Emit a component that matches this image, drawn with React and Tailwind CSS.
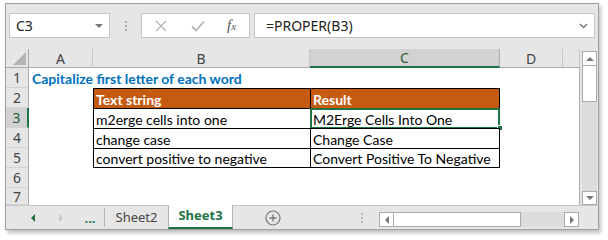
import React from "react";

const cellFont = { fontFamily: "Lato, 'Liberation Sans', sans-serif" };
const uiFont = { fontFamily: "'Noto Sans', 'Open Sans', sans-serif" };

const cols = ["A", "B", "C", "D", ""];
const rows = [1, 2, 3, 4, 5, 6, 7];

const data = {
    2: ["Text string", "Result"],
    3: ["m2erge cells into one", "M2Erge Cells Into One"],
    4: ["change case", "Change Case"],
    5: ["convert positive to negative", "Convert Positive To Negative"],
};

function FormulaBar() {
    return (
        <div className="flex items-stretch h-[25px] mt-[9px] px-[3px]" style={uiFont}>
            <div className="w-[101px] bg-white border border-[#c6c6c6] flex items-center justify-between pl-[6px] pr-[6px]">
                <span className="text-[14px] text-[#222]">C3</span>
                <span className="w-0 h-0 border-l-[4px] border-r-[4px] border-t-[4px] border-l-transparent border-r-transparent border-t-[#777]"></span>
            </div>
            <div className="w-[31px] flex flex-col items-center justify-center gap-[2px]">
                <span className="w-[2px] h-[2px] bg-[#aaa]"></span>
                <span className="w-[2px] h-[2px] bg-[#aaa]"></span>
                <span className="w-[2px] h-[2px] bg-[#aaa]"></span>
            </div>
            <div className="w-[109px] bg-white border border-[#c6c6c6] flex items-center">
                <svg className="ml-[13px]" width="12" height="12" viewBox="0 0 12 12">
                    <path d="M1 1 L11 11 M11 1 L1 11" stroke="#b4b4b4" strokeWidth="1.4" fill="none" />
                </svg>
                <svg className="ml-[24px]" width="14" height="12" viewBox="0 0 14 12">
                    <path d="M1 6.5 L5 10.5 L13 1.5" stroke="#b4b4b4" strokeWidth="1.8" fill="none" />
                </svg>
                <span className="ml-[22px] text-[15px] italic text-[#555]" style={{ fontFamily: "'Liberation Serif', serif" }}>
                    f<span className="text-[11px]">x</span>
                </span>
            </div>
            <div className="w-[4px]"></div>
            <div className="w-[341px] bg-white border border-[#c6c6c6] flex items-center justify-between pl-[11px] pr-[6px]">
                <span className="text-[14px] text-[#222]">=PROPER(B3)</span>
                <svg width="9" height="6" viewBox="0 0 9 6">
                    <path d="M1 1 L4.5 4.5 L8 1" stroke="#777" strokeWidth="1.5" fill="none" />
                </svg>
            </div>
        </div>
    );
}

function Grid() {
    return (
        <div
            className="grid grid-cols-[23px_64px_217px_190px_63px_17px] grid-rows-[19px_20px_20px_20px_20px_20px_20px_17px] overflow-hidden"
            style={cellFont}
        >
            {/* corner */}
            <div className="border-r border-b border-[#ababab] flex items-end justify-end p-[2px]">
                <span className="w-0 h-0" style={{ borderBottom: "13px solid #b4b4b4", borderLeft: "13px solid transparent" }}></span>
            </div>
            {cols.map((c) => (
                <div
                    key={c || "e"}
                    className={
                        c === "C"
                            ? "bg-[#d2d2d2] border-r border-[#ababab] border-b-2 border-b-[#217346] flex items-center justify-center text-[14px] text-[#1e5b3a]"
                            : "border-r border-[#c6c6c6] border-b border-b-[#ababab] flex items-center justify-center text-[14px] text-[#444]"
                    }
                    style={uiFont}
                >
                    {c}
                </div>
            ))}
            {rows.map((r) => (
                <React.Fragment key={r}>
                    <div
                        className={
                            r === 3
                                ? "bg-[#d2d2d2] border-b border-[#d4d4d4] border-r-2 border-r-[#217346] flex items-center justify-center text-[14px] text-[#1e5b3a]"
                                : "border-b border-[#d4d4d4] border-r border-r-[#ababab] flex items-center justify-center text-[14px] text-[#444]"
                        }
                        style={uiFont}
                    >
                        {r}
                    </div>
                    <div className="bg-white relative">
                        {r === 1 && (
                            <span className="absolute left-[3px] top-[1px] leading-[19px] whitespace-nowrap text-[14px] font-bold text-[#0070c0]">
                                Capitalize first letter of each word
                            </span>
                        )}
                    </div>
                    {[0, 1].map((i) => {
                        const v = data[r] ? data[r][i] : null;
                        if (!v) return <div key={i} className="bg-white"></div>;
                        const head = r === 2;
                        return (
                            <div
                                key={i}
                                className={
                                    "relative flex items-center pt-[2px] pl-[2px] leading-[16px] whitespace-nowrap text-[14px] border-t border-l border-black " +
                                    (i === 1 ? "border-r " : "") +
                                    (r === 5 ? "border-b " : "") +
                                    (head ? "bg-[#c55a11] text-white font-bold" : "bg-white text-black")
                                }
                            >
                                {v}
                                {r === 3 && i === 1 && (
                                    <>
                                        <span className="absolute -left-[1px] -top-[1px] -right-[1px] -bottom-[1px] border-2 border-[#217346]"></span>
                                        <span className="absolute -right-[4px] -bottom-[3px] w-[6px] h-[6px] bg-[#217346] border border-white"></span>
                                    </>
                                )}
                            </div>
                        );
                    })}
                    <div className="bg-white"></div>
                    <div className="bg-white border-r border-[#ababab]"></div>
                </React.Fragment>
            ))}
        </div>
    );
}

function VScroll() {
    return (
        <div className="ml-[2px] w-[15px] flex flex-col pt-[2px]">
            <div className="h-[15px] bg-white border border-[#ababab] flex items-center justify-center">
                <span className="w-0 h-0 border-l-[4px] border-r-[4px] border-b-[4px] border-l-transparent border-r-transparent border-b-[#777]"></span>
            </div>
            <div className="h-[36px] bg-white border border-[#ababab] border-t-0"></div>
            <div className="flex-1 bg-[#dcdcdc]"></div>
            <div className="h-[14px] bg-white border border-[#ababab] flex items-center justify-center">
                <span className="w-0 h-0 border-l-[4px] border-r-[4px] border-t-[4px] border-l-transparent border-r-transparent border-t-[#777]"></span>
            </div>
        </div>
    );
}

function TabBar() {
    return (
        <div className="h-[24px] flex items-stretch border-t border-[#c6c6c6]" style={uiFont}>
            <div className="ml-[19px] w-[16px] flex items-center justify-center">
                <span className="w-0 h-0 border-t-[4px] border-b-[4px] border-r-[4px] border-t-transparent border-b-transparent border-r-[#217346]"></span>
            </div>
            <div className="ml-[12px] w-[16px] flex items-center justify-center">
                <span className="w-0 h-0 border-t-[4px] border-b-[4px] border-l-[4px] border-t-transparent border-b-transparent border-l-[#c8c8c8]"></span>
            </div>
            <div className="ml-[11px] w-[20px] flex items-center justify-center text-[13px] font-bold text-[#217346] pt-[2px]">...</div>
            <div className="ml-[4px] w-[1px] my-[2px] bg-[#b4b4b4]"></div>
            <div className="w-[63px] flex items-center justify-center text-[13px] text-[#444]">Sheet2</div>
            <div className="w-[65px] -mt-[1px] bg-white border-l border-r border-[#b4b4b4] border-b-2 border-b-[#217346] flex items-center justify-center text-[13px] font-bold text-[#217346]">
                Sheet3
            </div>
            <div className="ml-[32px] w-[16px] flex items-center justify-center">
                <svg width="16" height="16" viewBox="0 0 16 16">
                    <circle cx="8" cy="8" r="7" stroke="#777" strokeWidth="1.2" fill="none" />
                    <path d="M8 4.5 V11.5 M4.5 8 H11.5" stroke="#777" strokeWidth="1.4" />
                </svg>
            </div>
            <div className="ml-[80px] w-[2px] flex flex-col items-center justify-center gap-[2px]">
                <span className="w-[2px] h-[2px] bg-[#bbb]"></span>
                <span className="w-[2px] h-[2px] bg-[#bbb]"></span>
                <span className="w-[2px] h-[2px] bg-[#bbb]"></span>
            </div>
            <div className="ml-[16px] w-[200px] h-[15px] mt-[6px] flex">
                <div className="w-[15px] bg-white border border-[#ababab] flex items-center justify-center">
                    <span className="w-0 h-0 border-t-[4px] border-b-[4px] border-r-[4px] border-t-transparent border-b-transparent border-r-[#777]"></span>
                </div>
                <div className="w-[127px] bg-white border-t border-b border-r border-[#ababab]"></div>
                <div className="flex-1 bg-[#dcdcdc]"></div>
                <div className="w-[15px] bg-white border border-[#ababab] flex items-center justify-center">
                    <span className="w-0 h-0 border-t-[4px] border-b-[4px] border-l-[4px] border-t-transparent border-b-transparent border-l-[#777]"></span>
                </div>
            </div>
        </div>
    );
}

export default function App() {
    return (
        <div className="w-[608px] h-[238px] bg-white pt-[3px] pl-[5px]">
            <div className="w-[594px] h-[227px] border border-[#9f9f9f] bg-[#e6e6e6] flex flex-col shadow-[2px_3px_4px_rgba(0,0,0,0.25)]">
                <FormulaBar />
                <div className="mt-[11px] flex h-[156px]">
                    <Grid />
                    <VScroll />
                </div>
                <TabBar />
            </div>
        </div>
    );
}
